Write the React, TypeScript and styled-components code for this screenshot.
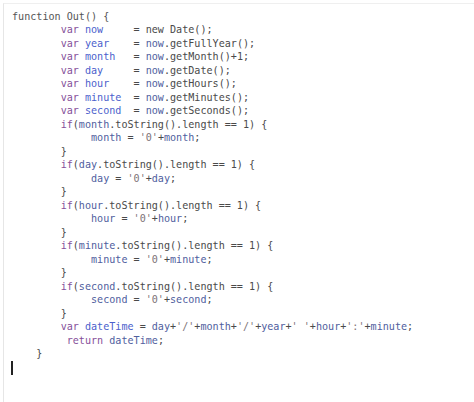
import React from "react";
import styled, { createGlobalStyle } from "styled-components";

const Global = createGlobalStyle`
  html, body { margin: 0; padding: 0; background: #ffffff; }
  body { width: 474px; height: 402px; overflow: hidden; }
`;

type Kind = "plain" | "kw" | "def" | "ref" | "str" | "fn";

const Frame = styled.div`
  margin: 3px 0 0 3px;
  height: 399px;
  box-sizing: border-box;
  border-top: 1px solid #efefef;
  border-left: 1px solid #e6e6e6;
  padding: 5.5px 0 0 8px;
  background: #ffffff;
`;

const Code = styled.pre`
  margin: 0;
  font-family: "DejaVu Sans Mono", "Liberation Mono", monospace;
  font-size: 10.1px;
  line-height: 13.5px;
  color: #4a4a4a;
  white-space: pre;
`;

const Line = styled.div`
  height: 13.5px;
`;

const colors: Record<Kind, string> = {
  plain: "#4a4a4a",
  kw: "#86509a",
  def: "#4c5fcc",
  ref: "#50609e",
  str: "#7e7478",
  fn: "#555555",
};

const Tok = styled.span<{ $kind: Kind }>`
  color: ${(p) => colors[p.$kind]};
`;

const Caret = styled.span`
  display: inline-block;
  width: 1.5px;
  height: 14px;
  background: #222;
  margin-left: -1px;
  vertical-align: top;
`;

type Seg = [string, Kind];

const I8 = "        ";
const I13 = "             ";

const lines: Seg[][] = [
  [["function Out() {", "fn"]],
  [[I8, "plain"], ["var ", "kw"], ["now", "def"], ["     = new Date();", "plain"]],
  [[I8, "plain"], ["var ", "kw"], ["year", "def"], ["    = ", "plain"], ["now", "ref"], [".getFullYear();", "plain"]],
  [[I8, "plain"], ["var ", "kw"], ["month", "def"], ["   = ", "plain"], ["now", "ref"], [".getMonth()+1;", "plain"]],
  [[I8, "plain"], ["var ", "kw"], ["day", "def"], ["     = ", "plain"], ["now", "ref"], [".getDate();", "plain"]],
  [[I8, "plain"], ["var ", "kw"], ["hour", "def"], ["    = ", "plain"], ["now", "ref"], [".getHours();", "plain"]],
  [[I8, "plain"], ["var ", "kw"], ["minute", "def"], ["  = ", "plain"], ["now", "ref"], [".getMinutes();", "plain"]],
  [[I8, "plain"], ["var ", "kw"], ["second", "def"], ["  = ", "plain"], ["now", "ref"], [".getSeconds();", "plain"]],
  [[I8, "plain"], ["if", "kw"], ["(", "plain"], ["month", "ref"], [".toString().length == 1) {", "plain"]],
  [[I13, "plain"], ["month", "ref"], [" = ", "plain"], ["'0'", "str"], ["+", "plain"], ["month", "ref"], [";", "plain"]],
  [[I8, "plain"], ["}", "plain"]],
  [[I8, "plain"], ["if", "kw"], ["(", "plain"], ["day", "ref"], [".toString().length == 1) {", "plain"]],
  [[I13, "plain"], ["day", "ref"], [" = ", "plain"], ["'0'", "str"], ["+", "plain"], ["day", "ref"], [";", "plain"]],
  [[I8, "plain"], ["}", "plain"]],
  [[I8, "plain"], ["if", "kw"], ["(", "plain"], ["hour", "ref"], [".toString().length == 1) {", "plain"]],
  [[I13, "plain"], ["hour", "ref"], [" = ", "plain"], ["'0'", "str"], ["+", "plain"], ["hour", "ref"], [";", "plain"]],
  [[I8, "plain"], ["}", "plain"]],
  [[I8, "plain"], ["if", "kw"], ["(", "plain"], ["minute", "ref"], [".toString().length == 1) {", "plain"]],
  [[I13, "plain"], ["minute", "ref"], [" = ", "plain"], ["'0'", "str"], ["+", "plain"], ["minute", "ref"], [";", "plain"]],
  [[I8, "plain"], ["}", "plain"]],
  [[I8, "plain"], ["if", "kw"], ["(", "plain"], ["second", "ref"], [".toString().length == 1) {", "plain"]],
  [[I13, "plain"], ["second", "ref"], [" = ", "plain"], ["'0'", "str"], ["+", "plain"], ["second", "ref"], [";", "plain"]],
  [[I8, "plain"], ["}", "plain"]],
  [
    [I8, "plain"], ["var ", "kw"], ["dateTime", "def"], [" = ", "plain"],
    ["day", "ref"], ["+", "plain"], ["'/'", "str"], ["+", "plain"],
    ["month", "ref"], ["+", "plain"], ["'/'", "str"], ["+", "plain"],
    ["year", "ref"], ["+", "plain"], ["' '", "str"], ["+", "plain"],
    ["hour", "ref"], ["+", "plain"], ["':'", "str"], ["+", "plain"],
    ["minute", "ref"], [";", "plain"],
  ],
  [[I8 + " ", "plain"], ["return ", "kw"], ["dateTime", "ref"], [";", "plain"]],
  [["    }", "plain"]],
];

export default function App() {
  return (
    <>
      <Global />
      <Frame>
        <Code>
          {lines.map((segs, i) => (
            <Line key={i}>
              {segs.map(([t, k], j) => (
                <Tok key={j} $kind={k}>
                  {t}
                </Tok>
              ))}
            </Line>
          ))}
          <Line>
            <Caret />
          </Line>
        </Code>
      </Frame>
    </>
  );
}
